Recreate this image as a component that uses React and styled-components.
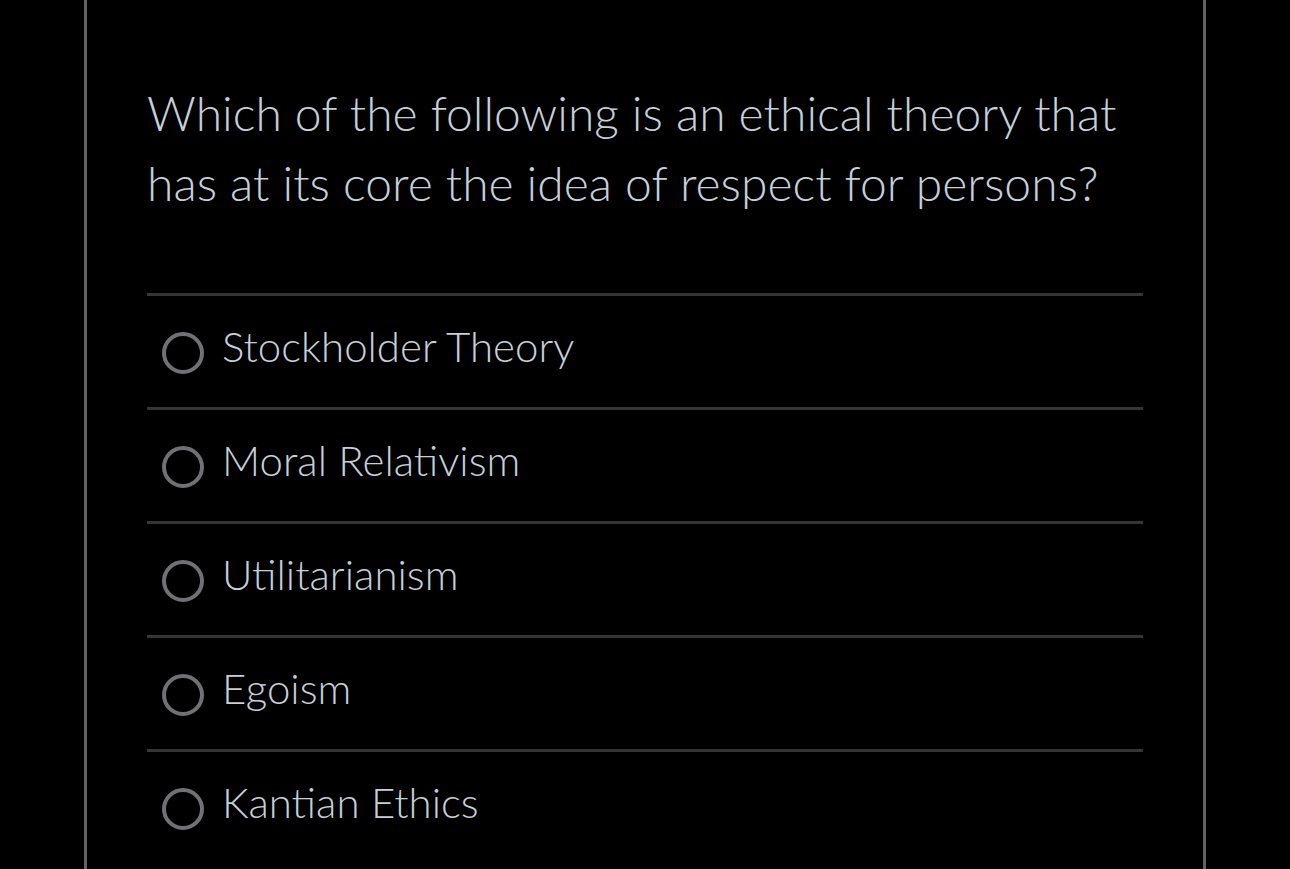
import React, { useState } from 'react';
import styled, { createGlobalStyle } from 'styled-components';

const GlobalStyle = createGlobalStyle`
  html, body {
    margin: 0;
    padding: 0;
    background: #000;
  }
  body {
    font-family: Lato, "Open Sans", sans-serif;
  }
`;

const Page = styled.div`
  height: 869px;
  overflow: hidden;
  background: #000;
  padding-left: 84px;
  padding-right: 84px;
`;

const Panel = styled.div`
  height: 100%;
  box-sizing: border-box;
  border-left: 3px solid #626262;
  border-right: 3px solid #626262;
  padding: 78px 60px 0 60px;
`;

const Question = styled.p`
  margin: 0 0 75px 0;
  font-size: 48px;
  font-weight: 300;
  line-height: 70px;
  color: #c5d0d9;
`;

const Options = styled.div`
  display: flex;
  flex-direction: column;
`;

const OptionRow = styled.label`
  display: flex;
  align-items: center;
  gap: 18px;
  height: 114px;
  box-sizing: border-box;
  border-top: 3px solid #353535;
  padding-left: 15px;
  cursor: pointer;
`;

const Radio = styled.span`
  width: 42px;
  height: 42px;
  box-sizing: border-box;
  border-radius: 50%;
  border: 4px solid ${(p) => (p.checked ? '#c5d0d9' : '#717175')};
  flex-shrink: 0;
  margin-top: 2px;
`;

const OptionText = styled.span`
  font-size: 42px;
  font-weight: 300;
  line-height: 50px;
  padding-bottom: 12px;
  color: #c5d0d9;
`;

const answers = [
  'Stockholder Theory',
  'Moral Relativism',
  'Utilitarianism',
  'Egoism',
  'Kantian Ethics',
];

const App = () => {
  const [selected, setSelected] = useState(null);

  return (
    <>
      <GlobalStyle />
      <Page>
        <Panel>
          <Question>
            Which of the following is an ethical theory that has at its core the idea of respect for persons?
          </Question>
          <Options>
            {answers.map((a) => (
              <OptionRow key={a} onClick={() => setSelected(a)}>
                <Radio checked={selected === a} />
                <OptionText>{a}</OptionText>
              </OptionRow>
            ))}
          </Options>
        </Panel>
      </Page>
    </>
  );
};

export default App;
